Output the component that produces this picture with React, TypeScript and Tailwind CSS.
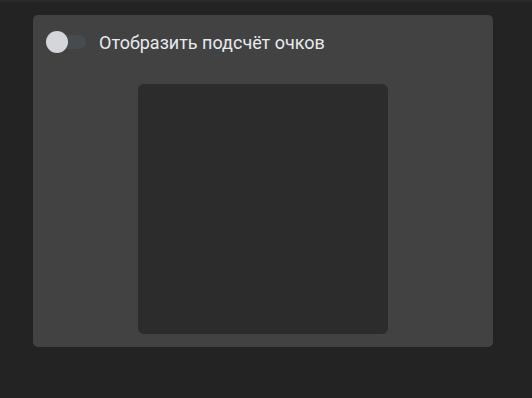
export default function App() {
  return (
    <div className="w-[532px] h-[398px] bg-[#232323] border-t-2 border-[#2b2b2b] pt-[13px] pl-[33px]" style={{ fontFamily: "Roboto, 'Noto Sans', sans-serif" }}>
      <div className="w-[460px] h-[332px] bg-[#424242] rounded-[5px] flex flex-col pt-4 px-[13px]">
        <div className="flex items-center h-[22px]">
          <div className="relative w-[40px] h-[22px] flex items-center">
            <div className="w-[40px] h-[14px] rounded-full bg-[#464b50]" />
            <div className="absolute left-0 top-0 w-[22px] h-[22px] rounded-full bg-[#d4d6da]" />
          </div>
          <span className="ml-[13px] mt-[2px] text-[18px] text-[#e8eaee] leading-[22px]">Отобразить подсчёт очков</span>
        </div>
        <div className="mt-[31px] self-center w-[250px] h-[250px] rounded-[6px] bg-[#2c2c2c]" />
      </div>
    </div>
  );
}
